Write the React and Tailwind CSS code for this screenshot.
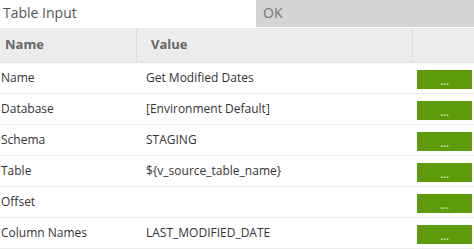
const rows = [
  { name: 'Name', value: 'Get Modified Dates' },
  { name: 'Database', value: '[Environment Default]' },
  { name: 'Schema', value: 'STAGING' },
  { name: 'Table', value: '${v_source_table_name}' },
  { name: 'Offset', value: '' },
  { name: 'Column Names', value: 'LAST_MODIFIED_DATE' },
]

export default function App() {
  return (
    <div className="w-[474px] h-[249px] bg-white overflow-hidden font-['Open_Sans',sans-serif] text-[#333]">
      <div className="flex h-[28px]">
        <div className="w-[256px] pl-[3px] pt-[2px] text-[14px] text-[#555]">Table Input</div>
        <div className="flex-1 h-[27px] bg-[#d4d4d4] pl-[7px] pt-[2px] text-[14px] text-[#777]">OK</div>
      </div>
      <div className="flex h-[35px] bg-[#ececec] border-b border-[#e2e2e2]">
        <div className="w-[136px] flex items-center pl-[5px] text-[13px] font-bold text-[#666]">Name</div>
        <div className="w-[276px] flex items-center pl-[14px] text-[13px] font-bold text-[#666] border-l border-[#dcdcdc]">Value</div>
        <div className="flex-1 border-l border-[#dcdcdc]"></div>
      </div>
      {rows.map((row) => (
        <div key={row.name} className="flex h-[31px] border-b border-[#ececec] text-[12px]">
          <div className="w-[136px] pl-[1px] pt-[6px]">{row.name}</div>
          <div className="w-[281px] pl-[10px] pt-[6px]">{row.value}</div>
          <div className="pt-[7px]">
            <button className="w-[55px] h-[19px] bg-[#5e9b0a] text-[#cfe3a6] text-[10px] font-bold leading-none flex items-end justify-center pb-[3px]">
              ...
            </button>
          </div>
        </div>
      ))}
    </div>
  )
}
